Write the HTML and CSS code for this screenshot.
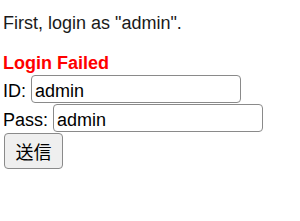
FILE: index.html
```html
<!DOCTYPE html>
<html lang="ja">
<head>
  <meta charset="UTF-8">
  <meta name="viewport" content="width=device-width, initial-scale=1.0">
  <title>Login</title>
  <link rel="stylesheet" href="styles.css">
</head>
<body>
  <p class="intro">First, login as "admin".</p>
  <p class="error">Login Failed</p>

  <form class="login-form" action="#" method="post">
    <div class="row">
      <label class="label" for="userId">ID:</label>
      <input class="field" type="text" id="userId" name="id" value="admin">
    </div>
    <div class="row">
      <label class="label" for="userPass">Pass:</label>
      <input class="field" type="text" id="userPass" name="pass" value="admin">
    </div>
    <button class="submit-btn" type="submit">送信</button>
  </form>
</body>
</html>
```

FILE: styles.css
```css
* {
  margin: 0;
  padding: 0;
  box-sizing: border-box;
}

body {
  font-family: "Liberation Sans", Arial, "Noto Sans CJK JP", sans-serif;
  font-size: 18px;
  color: #000;
  background-color: #fff;
  padding: 0 3px;
}

.intro {
  margin-top: 13px;
  line-height: 21px;
  color: #1a1a1a;
}

.error {
  margin-top: 19px;
  line-height: 20px;
  color: #ff0000;
  font-weight: bold;
}

.login-form {
  margin-top: 2px;
}

.row {
  display: flex;
  align-items: baseline;
  gap: 5px;
  height: 29px;
}

.field {
  width: 210px;
  height: 28px;
  padding: 4px 3px 0;
  font-family: "Liberation Sans", Arial, sans-serif;
  font-size: 18px;
  color: #000;
  border: 1px solid #8a8a8a;
  border-radius: 4px;
  background-color: #fff;
}

.submit-btn {
  display: block;
  width: 59px;
  height: 36px;
  margin-left: 1px;
  font-family: "Noto Sans CJK JP", sans-serif;
  font-size: 18px;
  color: #000;
  background-color: #efefef;
  border: 1px solid #8a8a8a;
  border-radius: 4px;
}
```
